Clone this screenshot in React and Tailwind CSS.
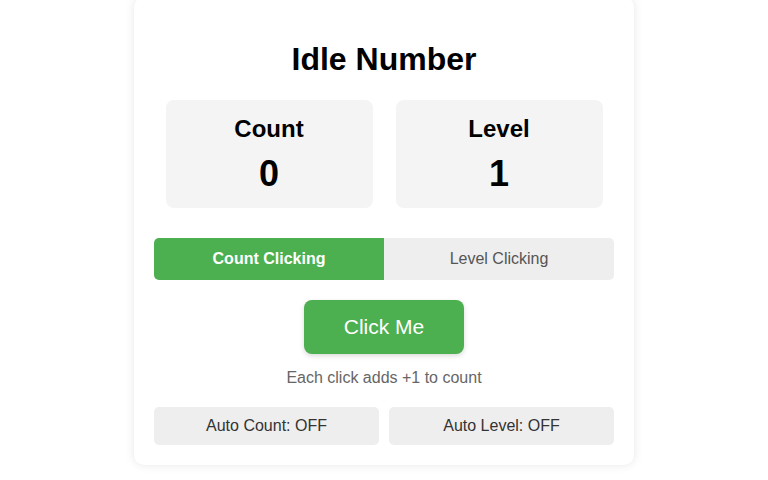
export default function App() {
  return (
    <div className="min-h-screen bg-white flex justify-center" style={{ fontFamily: '"Liberation Sans", Arial, sans-serif' }}>
      <div className="w-[500px] h-[468px] -mt-[3px] bg-white rounded-[10px] shadow-[0_0_10px_rgba(0,0,0,0.1)] px-5 pt-[23px] pb-5 flex flex-col">
        <h1 className="text-[32px] leading-[37px] font-bold text-black text-center mt-[21px] mb-[22px]">Idle Number</h1>
        <div className="flex justify-around">
          <div className="w-[207px] h-[108px] bg-[#f4f4f4] rounded-[8px] pt-[15px] flex flex-col items-center">
            <div className="text-[24px] leading-[28px] font-bold text-black">Count</div>
            <div className="text-[36px] leading-[41px] font-bold text-black mt-[10px]">0</div>
          </div>
          <div className="w-[207px] h-[108px] bg-[#f4f4f4] rounded-[8px] pt-[15px] flex flex-col items-center">
            <div className="text-[24px] leading-[28px] font-bold text-black">Level</div>
            <div className="text-[36px] leading-[41px] font-bold text-black mt-[10px]">1</div>
          </div>
        </div>
        <div className="flex mt-[30px] h-[42px] rounded-[5px] overflow-hidden">
          <div className="flex-1 bg-[#4caf50] text-white font-bold text-[16px] flex items-center justify-center">Count Clicking</div>
          <div className="flex-1 bg-[#eeeeee] text-[#555555] text-[16px] flex items-center justify-center">Level Clicking</div>
        </div>
        <div className="flex justify-center mt-[20px]">
          <div className="w-[160px] h-[54px] bg-[#4caf50] text-white text-[21px] rounded-[8px] shadow-[0_2px_5px_rgba(0,0,0,0.15)] flex items-center justify-center">Click Me</div>
        </div>
        <div className="text-center text-[16px] leading-[18px] text-[#666666] mt-[15px]">Each click adds +1 to count</div>
        <div className="flex gap-[10px] mt-[20px]">
          <div className="flex-1 h-[38px] bg-[#eeeeee] rounded-[5px] text-[#333333] text-[16px] flex items-center justify-center">Auto Count: OFF</div>
          <div className="flex-1 h-[38px] bg-[#eeeeee] rounded-[5px] text-[#333333] text-[16px] flex items-center justify-center">Auto Level: OFF</div>
        </div>
      </div>
    </div>
  );
}
